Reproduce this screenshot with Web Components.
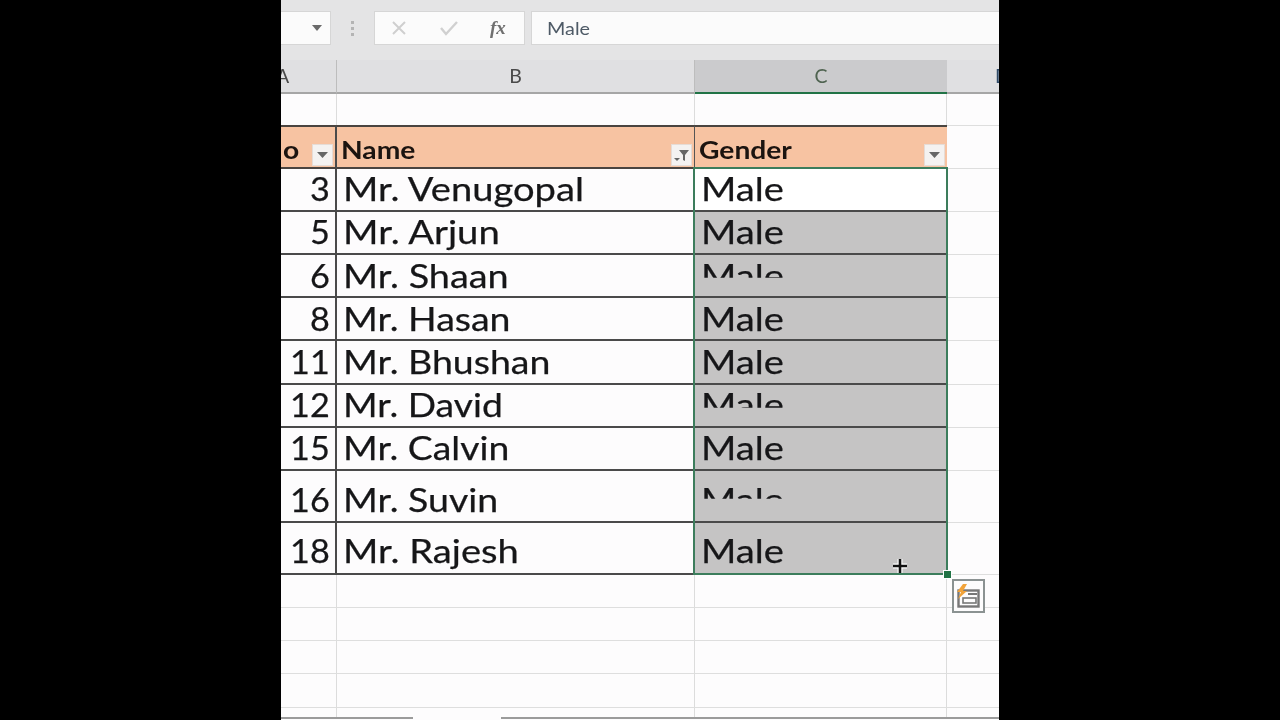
<!DOCTYPE html>
<html lang="en"><head><meta charset="utf-8"><title>Sheet</title>
<style>
html,body{margin:0;height:720px;background:#000;overflow:hidden}
body{display:flex;justify-content:center;font-family:Lato,"Liberation Sans",sans-serif}
</style></head><body>
<x-app>
  <x-formula-bar value="Male"></x-formula-bar>
  <x-col-headers></x-col-headers>
  <x-sheet>
    <x-row kind="blank" h="31" open></x-row>
    <x-row kind="head" h="44"></x-row>
    <x-row h="43" no="3" name="Mr. Venugopal" sx="1.17" shift="2" first></x-row>
    <x-row h="43" no="5" name="Mr. Arjun" sx="1.174" shift="2"></x-row>
    <x-row h="43" no="6" name="Mr. Shaan" sx="1.16" clip="14.5" shift="4"></x-row>
    <x-row h="43" no="8" name="Mr. Hasan" sx="1.15" shift="4"></x-row>
    <x-row h="44" no="11" name="Mr. Bhushan" sx="1.15" shift="4"></x-row>
    <x-row h="43" no="12" name="Mr. David" sx="1.144" clip="13.5" shift="2"></x-row>
    <x-row h="43" no="15" name="Mr. Calvin" sx="1.146" shift="2"></x-row>
    <x-row h="52" no="16" name="Mr. Suvin" sx="1.15" clip="17.5" shift="11"></x-row>
    <x-row h="52" no="18" name="Mr. Rajesh" sx="1.17" shift="9"></x-row>
    <x-row kind="blank" h="33"></x-row>
    <x-row kind="blank" h="33"></x-row>
    <x-row kind="blank" h="33"></x-row>
    <x-row kind="blank" h="34"></x-row>
    <x-row kind="blank" h="14"></x-row>
    <x-selection></x-selection>
  </x-sheet>
  <x-scrollbars></x-scrollbars>
</x-app>
<script>
function def(name, css, html, init){
  customElements.define(name, class extends HTMLElement{
    connectedCallback(){
      if(this.shadowRoot) return;
      const r=this.attachShadow({mode:'open'});
      const a=n=>this.getAttribute(n)??'';
      r.innerHTML='<style>'+css+'</style>'+(typeof html==='function'?html(a,this):html);
      if(init) init(r,a,this);
    }
  });
}
def('x-app',`:host{display:flex;flex-direction:column;width:718px;height:720px;overflow:hidden;position:relative;
  background:#fdfcfd;--cols:56px 358px 252px 52px;filter:blur(.45px)}`,'<slot></slot>');

def('x-formula-bar',`:host{display:flex;flex:none;height:60px;box-sizing:border-box;background:#e4e4e5;padding-top:11px;align-items:flex-start}
.box{height:34px;box-sizing:border-box;background:#fbfbfb;border:1px solid #d6d6d6;display:flex;align-items:center}
.name{width:50px;border-left:0;justify-content:flex-end;padding-right:8px}
.grip{width:43px;display:flex;justify-content:center;align-items:center;height:34px}
.fx{width:151px;gap:32px;padding-left:16px;margin-right:6px}
.val{flex:1;border-right:0;padding-left:15px;font-size:17.5px;color:#4e5a66}
.val span{display:inline-block;transform:scaleX(1.13);transform-origin:left}
i.f{font:italic 700 19px "Liberation Serif",serif;color:#707070;margin-left:-1px}
svg{display:block}
`,a=>`<div class="box name"><svg width="10" height="6" viewBox="0 0 10 6"><path d="M0 0h10L5 6z" fill="#6a6a6a"/></svg></div>
<div class="grip"><svg width="3" height="15" viewBox="0 0 3 15" fill="#b4b4b4"><rect width="3" height="3"/><rect y="6" width="3" height="3"/><rect y="12" width="3" height="3"/></svg></div>
<div class="box fx"><svg width="16" height="16" viewBox="0 0 16 16"><path d="M2 2l12 12M14 2L2 14" stroke="#cfcfcf" stroke-width="2" fill="none"/></svg>
<svg width="20" height="16" viewBox="0 0 20 16"><path d="M2 8l5 6L18 2" stroke="#d0d0d0" stroke-width="2.4" fill="none"/></svg>
<i class="f">fx</i></div>
<div class="box val"><span>${a('value')}</span></div>`);

def('x-col-headers',`:host{display:grid;flex:none;grid-template-columns:var(--cols);height:34px;background:#e0e0e2;overflow:hidden}
div{box-sizing:border-box;height:34px;border-bottom:2px solid #a6a6a6;border-right:1px solid #bdbdbd;display:flex;align-items:center;justify-content:center;font-size:19.5px;color:#4a4a4a;padding-bottom:1px;overflow:hidden}
.a{justify-content:flex-start;text-indent:-5px}
.c{background:#cbcbcd;border-bottom:2px solid #217346;border-right:0;color:#4f6350}
.d{justify-content:flex-start;text-indent:48px;border-right:0;color:#2f4a68}
`,`<div class="a">A</div><div>B</div><div class="c">C</div><div class="d">D</div>`);

def('x-sheet',`:host{display:block;position:relative;flex:none}`,'<slot></slot>');

def('x-filter',`:host{display:flex;align-items:center;justify-content:center;width:21px;height:22px;box-sizing:border-box;background:#f4f2f1;border:1px solid #e6dcd6;flex:none}
svg{display:block}`,'',(r,a,el)=>{
  r.innerHTML+=el.hasAttribute('active')
   ?'<svg width="16" height="13" viewBox="0 0 16 13"><path d="M5 1h10l-4 5v6l-2-1V6z" fill="#666"/><path d="M0 9h6l-3 3z" fill="#666"/></svg>'
   :'<svg width="11" height="7" viewBox="0 0 11 7"><path d="M0 0h11L5.5 6z" fill="#666"/></svg>';
});

def('x-row',`:host{display:grid;grid-template-columns:var(--cols);grid-template-rows:minmax(0,1fr);box-sizing:border-box;color:#161618}
.c{box-sizing:border-box;overflow:hidden;white-space:nowrap;display:flex;align-items:center;height:100%;min-height:0}
.t{display:inline-block;transform-origin:left center}
:host([kind=blank]) .c{border-right:1px solid #dcdcdc;border-bottom:1px solid #dedede}
:host([kind=blank][open]) .c{border-bottom:0}
:host([kind=blank]) .c:last-child{border-right:0}
:host(:not([kind])) .c{border-bottom:2px solid #4a4a4a;font-size:32.6px;line-height:1;padding-bottom:3px;-webkit-text-stroke:.25px #161618}
:host(:not([kind])) .no{justify-content:flex-end;padding-right:5px;border-right:2px solid #4a4a4a;overflow:visible}
:host(:not([kind])) .no .t{transform:scaleX(1.05);transform-origin:right center}
:host(:not([kind])) .name{padding-left:6px;border-right:1px solid #444}
:host(:not([kind])) .g{background:#c5c4c4;padding-left:6px}
:host(:not([kind])) .g .t{transform:scaleX(1.17)}
:host([first]) .g{background:#fff !important}
:host(:not([kind])) .x{border-bottom:1px solid #dedede;padding:0}
:host([kind=head]) .c{background:#f7c3a2;border-top:2px solid #4a4440;border-bottom:2px solid #4a4440;font:700 25.2px Lato,"Liberation Sans",sans-serif;color:#1c1410;justify-content:space-between;padding:3px 2px 0 4px}
:host([kind=head]) .t{transform:scaleX(1.12)}
:host([kind=head]) .no{border-right:2px solid #4a4a4a;padding-left:0}
:host([kind=head]) .no span{margin-left:2px}
:host([kind=head]) .name{border-right:1px solid #555}
:host([kind=head]) .x{background:none;border:0;border-top:1px solid #dedede;border-bottom:1px solid #dedede}
x-filter{align-self:flex-end;margin-bottom:1px}
`,(a,el)=>{
  const k=a('kind');
  if(k==='blank') return '<div class="c"></div><div class="c"></div><div class="c"></div><div class="c"></div>';
  if(k==='head') return '<div class="c no"><span class="t">o</span><x-filter></x-filter></div><div class="c name"><span class="t">Name</span><x-filter active></x-filter></div><div class="c"><span class="t">Gender</span><x-filter></x-filter></div><div class="c x"></div>';
  const clip=a('clip'), sh=+a('shift')||0;
  const st=sh?`style="padding-top:${sh}px"`:'';
  return `<div class="c no" ${st}><span class="t">${a('no')}</span></div><div class="c name" ${st}><span class="t" style="transform:scaleX(${a('sx')})">${a('name')}</span></div><div class="c g" ${st}><span class="t" ${clip?`style="clip-path:inset(0 0 ${clip}px 0)"`:''}>Male</span></div><div class="c x"></div>`;
},(r,a,el)=>{el.style.height=a('h')+'px';});

def('x-selection',`:host{position:absolute;left:412px;top:73px;width:255px;height:408px;box-sizing:border-box;border:2px solid #3c7d5c;pointer-events:none}
.h{position:absolute;right:-6px;bottom:-6px;width:7px;height:7px;background:#217346;border:1px solid #fff}
.p{position:absolute;left:197px;bottom:-1px;width:16px;height:16px}
.q{position:absolute;left:257px;top:410px;width:33px;height:34px;box-sizing:border-box;background:#fdfcfd;border:2px solid #8b9292;display:flex;align-items:center;justify-content:center}
`,`<div class="h"></div>
<svg class="p" viewBox="0 0 16 16"><path d="M8 1v14M1 8h14" stroke="#fff" stroke-width="5"/><path d="M8 1v14M1 8h14" stroke="#111" stroke-width="2.6"/></svg>
<div class="q"><svg width="25" height="24" viewBox="0 0 25 24"><rect x="2.5" y="6.5" width="20" height="16" fill="#fdfcfd" stroke="#777" stroke-width="2.4"/><rect x="7" y="14" width="13" height="5" fill="#fdfcfd" stroke="#777" stroke-width="1.6"/><path d="M12 10h9" stroke="#777" stroke-width="2"/><path d="M7 0L1 8h4L2 15l9-8H7l4-7z" fill="#f2a33a"/></svg></div>`);

def('x-scrollbars',`:host{position:absolute;left:0;right:0;bottom:0;height:3px;display:flex;background:#fdfcfd}
div{border-top:2px solid #9b9b9b;height:1px}.a{width:132px}.b{margin-left:88px;flex:1}`,'<div class="a"></div><div class="b"></div>');
</script>
</body></html>
